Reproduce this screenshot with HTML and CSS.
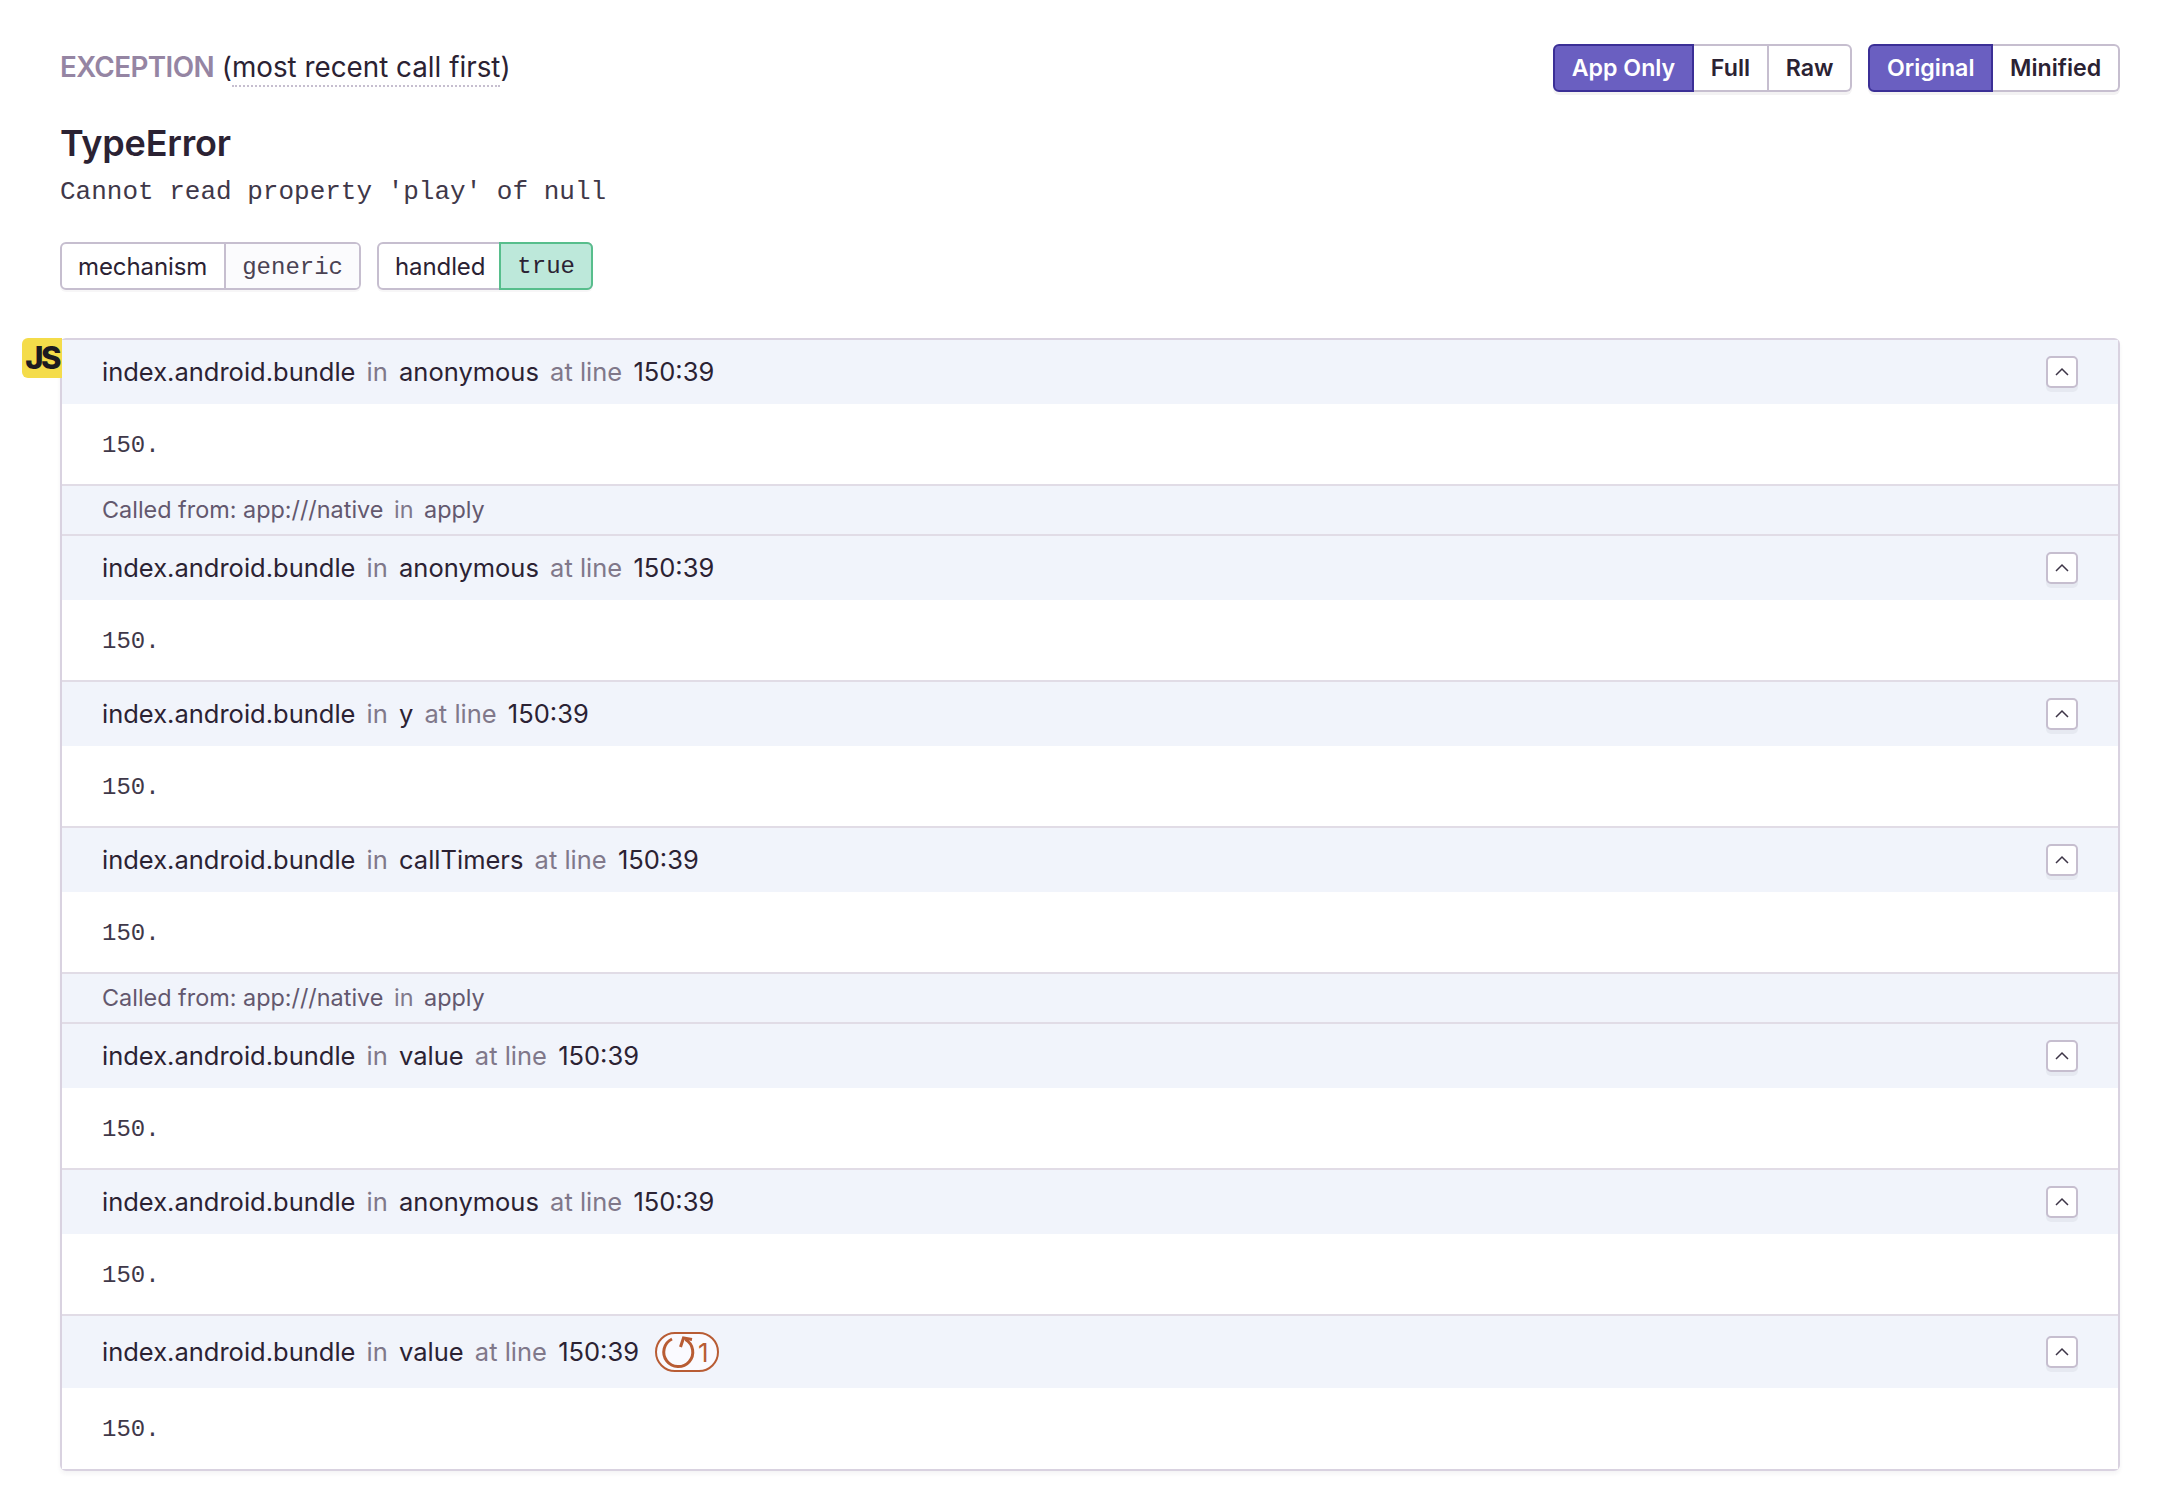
FILE: index.html
```html
<!DOCTYPE html>
<html lang="en">
<head>
<meta charset="utf-8">
<title>Exception</title>
<link rel="stylesheet" href="styles.css">
</head>
<body>
<main class="page">
  <header class="top">
    <h2 class="title"><span class="label">EXCEPTION</span> (<span class="dotted">most recent call first</span>)</h2>
    <div class="controls">
      <div class="btn-group">
        <button class="btn active">App Only</button><button class="btn">Full</button><button class="btn">Raw</button>
      </div>
      <div class="btn-group">
        <button class="btn active">Original</button><button class="btn">Minified</button>
      </div>
    </div>
  </header>
  <h3 class="error-type">TypeError</h3>
  <p class="error-msg">Cannot read property 'play' of null</p>
  <div class="tags">
    <div class="tag"><span class="tag-key">mechanism</span><span class="tag-val">generic</span></div>
    <div class="tag"><span class="tag-key short">handled</span><span class="tag-val yes">true</span></div>
  </div>
  <section class="panel">
    <span class="badge">JS</span>
    <div class="frame">
      <div class="frame-head"><span class="txt">index.android.bundle <i>in</i> anonymous <i>at line</i> 150:39</span><button class="toggle"><svg viewBox="0 0 16 16" width="16" height="16"><path d="M2 11 L8 5 L14 11" /></svg></button></div>
      <div class="code">150.</div>
    </div>
    <div class="called">Called from: app:///native <i>in</i> apply</div>
    <div class="frame">
      <div class="frame-head"><span class="txt">index.android.bundle <i>in</i> anonymous <i>at line</i> 150:39</span><button class="toggle"><svg viewBox="0 0 16 16" width="16" height="16"><path d="M2 11 L8 5 L14 11" /></svg></button></div>
      <div class="code">150.</div>
    </div>
    <div class="frame">
      <div class="frame-head"><span class="txt">index.android.bundle <i>in</i> y <i>at line</i> 150:39</span><button class="toggle"><svg viewBox="0 0 16 16" width="16" height="16"><path d="M2 11 L8 5 L14 11" /></svg></button></div>
      <div class="code">150.</div>
    </div>
    <div class="frame">
      <div class="frame-head"><span class="txt">index.android.bundle <i>in</i> callTimers <i>at line</i> 150:39</span><button class="toggle"><svg viewBox="0 0 16 16" width="16" height="16"><path d="M2 11 L8 5 L14 11" /></svg></button></div>
      <div class="code">150.</div>
    </div>
    <div class="called">Called from: app:///native <i>in</i> apply</div>
    <div class="frame">
      <div class="frame-head"><span class="txt">index.android.bundle <i>in</i> value <i>at line</i> 150:39</span><button class="toggle"><svg viewBox="0 0 16 16" width="16" height="16"><path d="M2 11 L8 5 L14 11" /></svg></button></div>
      <div class="code">150.</div>
    </div>
    <div class="frame">
      <div class="frame-head"><span class="txt">index.android.bundle <i>in</i> anonymous <i>at line</i> 150:39</span><button class="toggle"><svg viewBox="0 0 16 16" width="16" height="16"><path d="M2 11 L8 5 L14 11" /></svg></button></div>
      <div class="code">150.</div>
    </div>
    <div class="frame last">
      <div class="frame-head tall"><span class="txt">index.android.bundle <i>in</i> value <i>at line</i> 150:39</span><span class="repeat"><svg viewBox="0 0 36 36" width="36" height="36"><path d="M12 5 A14.5 14.5 0 1 0 25.5 5.5" /><path d="M20.5 13 L23.5 4 L32 5.5" /></svg><b>1</b></span><button class="toggle"><svg viewBox="0 0 16 16" width="16" height="16"><path d="M2 11 L8 5 L14 11" /></svg></button></div>
      <div class="code">150.</div>
    </div>
  </section>
</main>
</body>
</html>
```
FILE: styles.css
```css
* { box-sizing: border-box; }
html, body { margin: 0; background: #fff; }
body { font-family: Inter, "Liberation Sans", sans-serif; color: #2b2233; }
.page { width: 2180px; padding: 44px 60px 24px 60px; }
.top { display: flex; justify-content: space-between; align-items: flex-start; height: 50px; }
.title { margin: 5px 0 0; font-size: 27.8px; font-weight: 400; line-height: 36px; }
.label { color: #9585a3; font-weight: 600; letter-spacing: -0.6px; }
.dotted { border-bottom: 2px dotted #c6becf; padding-bottom: 1px; }
.controls { display: flex; gap: 16px; }
.btn-group { display: flex; border-radius: 6px; box-shadow: 0 3px 0 rgba(43,34,51,.06); }
.btn { height: 48px; padding: 0 16.8px; border: 2px solid #c6becf; border-left-width: 0; background: #fff; color: #2b2233; font: 600 23.2px Inter, sans-serif; }
.btn:first-child { border-left-width: 2px; border-radius: 6px 0 0 6px; }
.btn:last-child { border-radius: 0 6px 6px 0; }
.btn.active { background: #6a5fc1; border-color: #3b2f96; border-width: 2px; color: #fff; }
.error-type { margin: 27px 0 0; font-size: 36px; line-height: 44px; font-weight: 600; letter-spacing: -0.2px; }
.error-msg { margin: 9px 0 0; font: 26px/36px "Liberation Mono", monospace; color: #3f3849; }
.tags { display: flex; gap: 16px; margin-top: 32px; }
.tag { display: flex; height: 48px; border: 2px solid #c6becf; border-radius: 6px; font-size: 24px; box-shadow: 0 2px 0 rgba(43,34,51,.04); }
.tag-key { display: flex; align-items: center; padding: 0 17px 0 16px; letter-spacing: -0.1px; }
.tag-key.short { padding-right: 14px; }
.tag-val { display: flex; align-items: center; padding: 2px 16px 0; border-left: 2px solid #c6becf; border-radius: 0 4px 4px 0; background: #fbfbfd; font: 24px "Liberation Mono", monospace; color: #4a4253; }
.tag-val.yes { margin: -2px -2px -2px 0; border: 2px solid #57be8c; border-radius: 0 6px 6px 0; padding-top: 0; background: #bde8da; color: #2b2233; }
.panel { position: relative; margin-top: 48px; border: 2px solid #d9d2e0; border-radius: 6px; box-shadow: 0 3px 4px rgba(43,34,51,.05); }
.badge { position: absolute; left: -40px; top: -2px; width: 40px; height: 40px; background: #f4dc4a; border-radius: 6px 0 0 6px; font: 800 31px/40px Inter, sans-serif; color: #1c1a20; text-align: center; letter-spacing: -2.5px; }
.frame { border-bottom: 2px solid #e1dce6; }
.frame.last { border-bottom: 0; }
.frame-head { display: flex; align-items: center; height: 64px; padding: 0 40px; background: #f1f4fb; }
.frame-head.tall { height: 72px; }
.txt { font-size: 25.5px; white-space: pre; position: relative; top: -1px; }
.txt i, .called i { font-style: normal; color: #80788a; margin: 0 4px; }
.toggle { display: flex; align-items: center; justify-content: center; margin-left: auto; width: 32px; height: 32px; padding: 0; background: #fff; border: 2px solid #c6becf; border-radius: 5px; box-shadow: 0 4px 0 rgba(43,34,51,.05); }
.toggle svg { display: block; }
.toggle path { fill: none; stroke: #3d3547; stroke-width: 1.5; }
.code { height: 80px; padding: 2px 40px 0; display: flex; align-items: center; background: #fff; font: 24px "Liberation Mono", monospace; color: #3f3849; }
.last .code { height: 81px; }
.called { display: flex; align-items: center; height: 50px; padding: 0 40px 2px; background: #f1f4fb; border-bottom: 2px solid #e1dce6; font-size: 23.4px; color: #63586e; white-space: pre; }
.repeat { display: inline-flex; align-items: center; margin-left: 16px; height: 40px; width: 64px; padding: 0 4px 0 3px; background: #fafaff; border: 2px solid #b85c34; border-radius: 20px; color: #b85c34; }
.repeat svg { flex: none; }
.repeat path { fill: none; stroke: #b85c34; stroke-width: 3; }
.repeat b { font-weight: 400; font-size: 26px; margin-left: 2px; }
```
